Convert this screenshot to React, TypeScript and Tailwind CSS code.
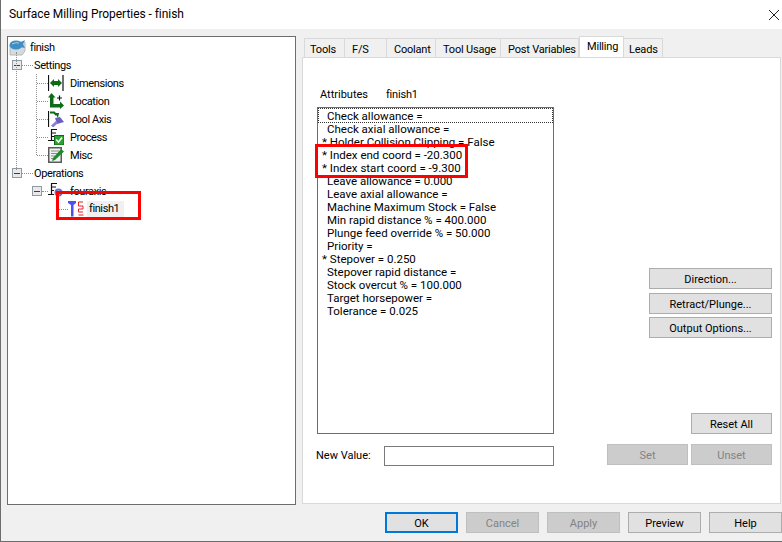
import type { ReactNode } from "react"

const attributes = [
  "Check allowance =",
  "Check axial allowance =",
  "* Holder Collision Clipping = False",
  "* Index end coord = -20.300",
  "* Index start coord = -9.300",
  "Leave allowance = 0.000",
  "Leave axial allowance =",
  "Machine Maximum Stock = False",
  "Min rapid distance % = 400.000",
  "Plunge feed override % = 50.000",
  "Priority =",
  "* Stepover = 0.250",
  "Stepover rapid distance =",
  "Stock overcut % = 100.000",
  "Target horsepower =",
  "Tolerance = 0.025",
]

const tabs = [
  { label: "Tools", box: "w-[41px] pl-[5px]" },
  { label: "F/S", box: "w-[42px] pl-[7px]" },
  { label: "Coolant", box: "w-[49px] pl-[7px]" },
  { label: "Tool Usage", box: "w-[65px] pl-[7px]" },
  { label: "Post Variables", box: "w-[78px] pl-[7px]" },
]

function StockIcon() {
  return (
    <svg width="17" height="17" viewBox="0 0 17 17">
      <path d="M1 6 L5 3 H16 V12 L13 16 H1 Z" fill="#d4dadd" stroke="#b4bcc0" strokeWidth="1" />
      <ellipse cx="7" cy="6" rx="6.5" ry="4.5" fill="#3f8fc4" />
      <path d="M10 4 L16 1 L14 5 L16 9 L11 8 Z" fill="#3f8fc4" />
      <path d="M3 5 Q7 3 10 4" stroke="#a5d3ee" strokeWidth="1" fill="none" />
    </svg>
  )
}

function DimensionsIcon() {
  return (
    <svg width="16" height="16" viewBox="0 0 16 16">
      <path d="M0.5 0 V16 M15 0 V16" stroke="#111" strokeWidth="1.2" />
      <path d="M2 8 L6 4 V6 H10 V4 L14 8 L10 12 V10 H6 V12 Z" fill="#0d6b16" />
    </svg>
  )
}

function LocationIcon() {
  return (
    <svg width="16" height="16" viewBox="0 0 16 16">
      <path d="M3.5 0 L7.5 4.5 H5.5 V11 H12 V8.5 L16 12.5 L12 16 V14.5 H2 V4.5 H0 Z" fill="#0d6b16" />
      <path d="M9 5 H14 M11.5 2.5 V7.5" stroke="#111" strokeWidth="1.2" />
    </svg>
  )
}

function ToolAxisIcon() {
  return (
    <svg width="16" height="16" viewBox="0 0 16 16">
      <path d="M0.5 0 V16" stroke="#111" strokeWidth="1.2" />
      <path d="M2 1.5 H6 L8.5 4" stroke="#0d6b16" strokeWidth="2" fill="none" />
      <path d="M7 2 L11 2 L10 7 Z" fill="#0d6b16" />
      <path d="M7 7 L12 6 L16 11 L9 13 Z" fill="#6a5fc0" />
      <path d="M9 11 L4 15.5" stroke="#8a82d0" strokeWidth="3" />
    </svg>
  )
}

function ProcessIcon() {
  return (
    <svg width="16" height="16" viewBox="0 0 16 16">
      <path d="M3 0.5 H9 M3.5 0.5 V4 H8 M3.5 4 V7.5 H6 M3.5 7.5 V11.5 M0 11.5 H6" stroke="#111" strokeWidth="1.2" fill="none" />
      <rect x="6.5" y="6.5" width="9.5" height="9.5" fill="#27a52c" stroke="#0d6b16" />
      <path d="M8 10.5 L10.5 13 L14 8.5" stroke="#fff" strokeWidth="1.6" fill="none" />
    </svg>
  )
}

function MiscIcon() {
  return (
    <svg width="16" height="16" viewBox="0 0 16 16">
      <rect x="0.75" y="0.75" width="12.5" height="14.5" fill="#f2f2f2" stroke="#5a5a5a" strokeWidth="1.5" />
      <path d="M3 4 H11 M3 6.5 H9 M3 9 H7 M3 11.5 H5" stroke="#8a8a8a" strokeWidth="1" />
      <path d="M4 14 L5 11 L13 2 L16 4.5 L7 13 Z" fill="#1f8a2d" />
    </svg>
  )
}

function FourAxisIcon() {
  return (
    <svg width="16" height="16" viewBox="0 0 16 16">
      <path d="M3 0.5 H9 M3.5 0.5 V4 H8 M3.5 4 V7.5 H6 M3.5 7.5 V11.5 M0 11.5 H6" stroke="#111" strokeWidth="1.2" fill="none" />
      <circle cx="10.5" cy="9.5" r="3" fill="#dfe1f5" stroke="#6a6fd0" strokeWidth="2" />
    </svg>
  )
}

function FinishIcon() {
  return (
    <svg width="16" height="16" viewBox="0 0 16 16">
      <path d="M0 0 H8 V2 L5.5 4 V15.5 H3 V4 L0 2 Z" fill="#5050f0" />
      <path d="M15 1 H10.5 V5 H15 V8 H10.5 V11 H15 M10.5 14 H15.5" stroke="#e8202a" strokeWidth="1" fill="none" />
    </svg>
  )
}

function Expander() {
  return (
    <span className="flex h-[10px] w-[10px] shrink-0 items-center justify-center border border-[#8f9aa5] bg-[#e9e9e9]">
      <span className="h-px w-[6px] bg-[#2f3f5f]" />
    </span>
  )
}

function Dots({ width }: { width: string }) {
  return <span className={`${width} shrink-0 border-t border-dotted border-[#8f8f8f]`} />
}

function TreeRow({ children }: { children: ReactNode }) {
  return <div className="flex h-[18px] items-center whitespace-nowrap">{children}</div>
}

function Leaf({ icon, label }: { icon: ReactNode; label: string }) {
  return (
    <TreeRow>
      <span className="w-[29px] shrink-0" />
      <Dots width="w-[11px]" />
      {icon}
      <span className="ml-[6px]">{label}</span>
    </TreeRow>
  )
}

function Group({ label }: { label: string }) {
  return (
    <TreeRow>
      <span className="w-[4px] shrink-0" />
      <Expander />
      <Dots width="w-[11px]" />
      <span className="ml-px">{label}</span>
    </TreeRow>
  )
}

function Tree() {
  return (
    <div className="relative h-[469px] w-[289px] border border-[#6d6d6d] bg-white pt-px text-[11px] tracking-[-0.4px]">
      <TreeRow>
        <span className="ml-px">
          <StockIcon />
        </span>
        <span className="ml-[4px]">finish</span>
      </TreeRow>
      <Group label="Settings" />
      <Leaf icon={<DimensionsIcon />} label="Dimensions" />
      <Leaf icon={<LocationIcon />} label="Location" />
      <Leaf icon={<ToolAxisIcon />} label="Tool Axis" />
      <Leaf icon={<ProcessIcon />} label="Process" />
      <Leaf icon={<MiscIcon />} label="Misc" />
      <Group label="Operations" />
      <TreeRow>
        <span className="w-[24px] shrink-0" />
        <Expander />
        <Dots width="w-[6px]" />
        <FourAxisIcon />
        <span className="ml-[6px]">fouraxis</span>
      </TreeRow>
      <TreeRow>
        <span className="w-[49px] shrink-0" />
        <Dots width="w-[11px]" />
        <FinishIcon />
        <span className="ml-[3px] bg-[#f0f0f0] pl-[2px] pr-[5px] leading-[16px]">finish1</span>
      </TreeRow>
      {/* tree guide lines */}
      <span className="absolute left-[8px] top-[15px] h-[118px] border-l border-dotted border-[#8f8f8f]" />
      <span className="absolute left-[28px] top-[37px] h-[81px] border-l border-dotted border-[#8f8f8f]" />
      {/* annotation box */}
      <span className="absolute left-[48px] top-[154px] h-[29px] w-[85px] border-[3px] border-[#ff0000]" />
    </div>
  )
}

function Button({ label, width, disabled, primary }: { label: string; width: string; disabled?: boolean; primary?: boolean }) {
  const tone = primary
    ? "border-2 border-[#0078d7] bg-[#e1e1e1] text-black"
    : disabled
      ? "border border-[#bfbfbf] bg-[#cccccc] text-[#838383]"
      : "border border-[#adadad] bg-[#e1e1e1] text-black"
  return <button className={`flex h-[21px] ${width} shrink-0 items-center justify-center pt-[2px] text-[11px] ${tone}`}>{label}</button>
}

export default function App() {
  return (
    <div
      className="flex h-[542px] w-[782px] flex-col overflow-hidden border-b border-l border-[#6d6d6d] bg-[#f0f0f0] text-[12px] leading-[13px] text-black"
      style={{ fontFamily: "Roboto, sans-serif" }}
    >
      <div className="flex h-[29px] shrink-0 items-center justify-between bg-white pl-[8px] pr-[3px]">
        <span className="tracking-[-0.05px]">Surface Milling Properties - finish</span>
        <svg width="10" height="10" viewBox="0 0 10 10">
          <path d="M0 0 L10 10 M10 0 L0 10" stroke="#222" strokeWidth="1" />
        </svg>
      </div>

      <div className="flex pl-[6px] pt-[7px]">
        <Tree />

        <div className="ml-[6px] flex w-[479px] flex-col">
          <div className="flex h-[21px] items-end whitespace-nowrap pl-[2px] text-[11px] tracking-[-0.2px]">
            {tabs.map((t) => (
              <div key={t.label} className={`flex h-[19px] ${t.box} items-center border-r border-t border-[#d9d9d9] bg-[#f0f0f0] pt-[2px] first:border-l`}>
                {t.label}
              </div>
            ))}
            <div className="flex h-[21px] w-[45px] items-center border-x border-t border-[#d9d9d9] bg-white pb-[2px] pl-[7px]">Milling</div>
            <div className="flex h-[19px] w-[39px] items-center border-r border-t border-[#d9d9d9] bg-[#f0f0f0] pl-[5px] pt-[2px]">Leads</div>
          </div>

          <div className="relative h-[447px] border border-[#d9d9d9] bg-white pl-[14px] pr-[8px] pt-[28px]">
            <div className="flex h-[15px] items-center pl-[3px] pt-[2px] text-[11px]">
              <span className="w-[66px]">Attributes</span>
              <span className="tracking-[-0.2px]">finish1</span>
            </div>
            <div className="mt-[6px] flex justify-between">
              <div>
                <div className="h-[327px] w-[237px] border border-[#6d6d6d] bg-white px-px pt-px text-[11.5px] leading-[15px]">
                  {attributes.map((a, i) => (
                    <div
                      key={a}
                      className={`h-[13px] whitespace-pre ${a.startsWith("*") ? "pl-[3px]" : "pl-[8px]"} ${i === 0 ? "outline outline-1 outline-dotted outline-[#333]" : ""}`}
                    >
                      {a}
                    </div>
                  ))}
                </div>
                <div className="mt-[12px] flex items-center">
                  <span className="ml-[-1px] w-[68px] pb-[2px] text-[11px]">New Value:</span>
                  <div className="h-[20px] w-[170px] border border-[#7a7a7a] bg-white" />
                </div>
              </div>

              <div className="flex w-[165px] flex-col items-end">
                <div className="mt-[161px]">
                  <Button label="Direction..." width="w-[123px]" />
                </div>
                <div className="mt-[4px]">
                  <Button label="Retract/Plunge..." width="w-[123px]" />
                </div>
                <div className="mt-[3px]">
                  <Button label="Output Options..." width="w-[123px]" />
                </div>
                <div className="mt-[75px]">
                  <Button label="Reset All" width="w-[81px]" />
                </div>
                <div className="mt-[10px] flex gap-[3px]">
                  <Button label="Set" width="w-[81px]" disabled />
                  <Button label="Unset" width="w-[81px]" disabled />
                </div>
              </div>
            </div>
            {/* annotation box */}
            <span className="absolute left-[12px] top-[86px] h-[34px] w-[153px] border-[3px] border-[#ff0000]" />
          </div>

          <div className="ml-[83px] mt-[8px] flex gap-[8px]">
            <Button label="OK" width="w-[73px]" primary />
            <Button label="Cancel" width="w-[73px]" disabled />
            <Button label="Apply" width="w-[73px]" disabled />
            <Button label="Preview" width="w-[73px]" />
            <Button label="Help" width="w-[73px]" />
          </div>
        </div>
      </div>
    </div>
  )
}
